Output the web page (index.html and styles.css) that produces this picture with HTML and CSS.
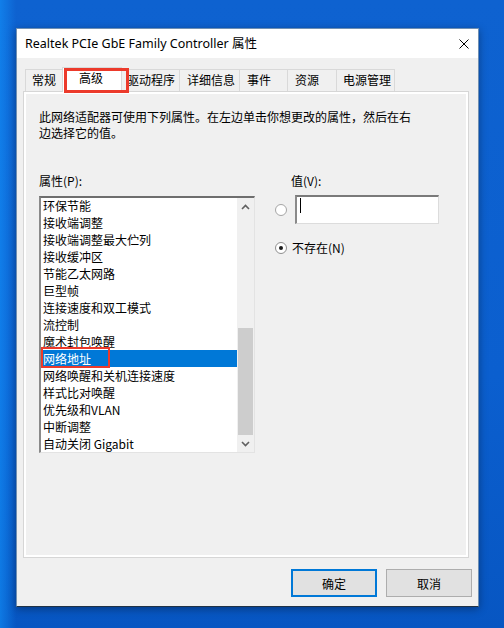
FILE: index.html
```html
<!DOCTYPE html>
<html lang="zh-CN">
<head>
<meta charset="utf-8">
<title>Realtek PCIe GbE Family Controller 属性</title>
<link rel="stylesheet" href="styles.css">
</head>
<body>
<div class="desktop">
  <div class="window">
    <div class="titlebar">
      <span class="title">Realtek PCIe GbE Family Controller 属性</span>
      <svg class="close" width="10" height="10" viewBox="0 0 10 10"><path d="M0.5 0.5 L9.5 9.5 M9.5 0.5 L0.5 9.5" stroke="#000" stroke-width="1" fill="none"/></svg>
    </div>
    <div class="client">
      <div class="tabs">
        <div class="tab first t-general">常规</div>
        <div class="tab selected t-adv">高级<span class="mark tab-mark"></span></div>
        <div class="tab t-driver">驱动程序</div>
        <div class="tab t-detail">详细信息</div>
        <div class="tab t-event">事件</div>
        <div class="tab t-res">资源</div>
        <div class="tab t-power">电源管理</div>
      </div>
      <div class="panel">
        <p class="desc">此网络适配器可使用下列属性。在左边单击你想更改的属性，然后在右边选择它的值。</p>
        <div class="props">
          <div class="left-col">
            <div class="label">属性(P):</div>
            <div class="listbox">
              <div class="items-wrap">
                <ul class="items">
                  <li>环保节能</li>
                  <li>接收端调整</li>
                  <li>接收端调整最大伫列</li>
                  <li>接收缓冲区</li>
                  <li>节能乙太网路</li>
                  <li>巨型帧</li>
                  <li>连接速度和双工模式</li>
                  <li>流控制</li>
                  <li>魔术封包唤醒</li>
                  <li class="sel">网络地址<span class="mark item-mark"></span></li>
                  <li>网络唤醒和关机连接速度</li>
                  <li>样式比对唤醒</li>
                  <li>优先级和VLAN</li>
                  <li>中断调整</li>
                  <li>自动关闭 Gigabit</li>
                </ul>
              </div>
              <div class="scrollbar">
                <div class="sb-btn">
                  <svg width="9" height="6" viewBox="0 0 9 6"><path d="M1 5 L4.5 1.5 L8 5" stroke="#606060" stroke-width="1.6" fill="none"/></svg>
                </div>
                <div class="sb-track"><div class="sb-thumb"></div></div>
                <div class="sb-btn">
                  <svg width="9" height="6" viewBox="0 0 9 6"><path d="M1 1 L4.5 4.5 L8 1" stroke="#606060" stroke-width="1.6" fill="none"/></svg>
                </div>
              </div>
            </div>
          </div>
          <div class="right-col">
            <div class="label vlabel">值(V):</div>
            <div class="vrow">
              <span class="radio"></span>
              <div class="textbox"><span class="caret"></span></div>
            </div>
            <div class="vrow2">
              <span class="radio checked"></span>
              <span class="rlabel">不存在(N)</span>
            </div>
          </div>
        </div>
      </div>
      <div class="buttons">
        <button class="btn primary">确定</button>
        <button class="btn">取消</button>
      </div>
    </div>
  </div>
</div>
</body>
</html>
```
FILE: styles.css
```css
* { box-sizing: border-box; }
html, body { margin: 0; padding: 0; }
body {
  font-family: "Noto Sans CJK SC", "Noto Sans", sans-serif;
  font-size: 12px;
  color: #000;
}
.desktop {
  width: 504px;
  height: 628px;
  padding: 28px 0 0 16px;
  overflow: hidden;
  background:
    linear-gradient(90deg, rgba(20,150,255,0.55) 0px, rgba(20,150,255,0) 16px),
    linear-gradient(180deg, #0e62d0 0%, #0b5fcf 60%, #0756c2 100%);
}
.window {
  width: 463px;
  height: 579px;
  background: #f0f0f0;
  border: 1px solid #6f8fb2;
  border-bottom-color: #1f3246;
  box-shadow: 0 2px 8px rgba(0,0,0,0.35);
  display: flex;
  flex-direction: column;
}
.titlebar {
  height: 29px;
  background: #fff;
  display: flex;
  align-items: center;
  padding-left: 8px;
  padding-right: 9px;
}
.title {
  flex: 1;
  font-family: "Noto Sans", "Noto Sans CJK SC", sans-serif;
  font-size: 12.5px;
  line-height: 16px;
  padding-top: 1px;
}
.close { display: block; margin-top: 0; }
.client {
  padding: 9px 9px 0 6px;
  display: flex;
  flex-direction: column;
}
.tabs {
  display: flex;
  align-items: flex-end;
  height: 25px;
  padding-left: 2px;
  position: relative;
  z-index: 2;
  margin-bottom: -1px;
}
.tab {
  height: 22px;
  margin-bottom: 1px;
  background: #f0f0f0;
  border-top: 1px solid #d9d9d9;
  border-right: 1px solid #d9d9d9;
  padding-left: 7px;
  line-height: 20px;
  white-space: nowrap;
}
.tab.first { border-left: 1px solid #d9d9d9; padding-left: 6px; }
.t-general { width: 39px; }
.t-driver { width: 60px; }
.t-detail { width: 60px; }
.t-event { width: 48px; }
.t-res { width: 49px; }
.t-power { width: 58px; padding-left: 6px; }
.tab.selected {
  position: relative;
  width: 60px;
  height: 25px;
  margin: 0 -2px 0 -2px;
  background: #fff;
  border: 1px solid #d9d9d9;
  border-bottom: none;
  padding-left: 16px;
  line-height: 20px;
  z-index: 3;
}
.mark {
  position: absolute;
  border: 2px solid #ec3a2b;
  pointer-events: none;
}
.tab-mark {
  left: 1px;
  top: 0px;
  width: 65px;
  height: 25px;
  border-width: 3px;
}
.panel {
  height: 467px;
  border: 1px solid #d6d6d6;
  box-shadow: inset 0 0 0 2px #fff;
  padding: 17px 0 0 15px;
  position: relative;
  z-index: 1;
}
.desc {
  margin: 0;
  width: 378px;
  line-height: 16px;
}
.props {
  display: flex;
  margin-top: 32px;
}
.left-col { width: 216px; }
.label { line-height: 16px; }
.listbox {
  margin-top: 7px;
  height: 257px;
  display: flex;
  border-style: solid;
  border-width: 2px 1px 1px 2px;
  border-color: #6e6e6e #e3e3e3 #e3e3e3 #8a8a8a;
  background: #fff;
}
.items-wrap {
  flex: 1;
  overflow: hidden;
}
.items {
  list-style: none;
  margin: -1px 0 0 0;
  padding: 0;
}
.items li {
  height: 17px;
  line-height: 17px;
  padding-left: 2px;
  white-space: nowrap;
  position: relative;
}
.items li.sel {
  background: #0078d7;
  color: #fff;
}
.item-mark {
  left: 0px;
  top: -3px;
  width: 69px;
  height: 21px;
}
.scrollbar {
  width: 17px;
  background: #f0f0f0;
  display: flex;
  flex-direction: column;
}
.sb-btn {
  height: 17px;
  display: flex;
  align-items: center;
  justify-content: center;
}
.sb-btn svg { display: block; }
.sb-track {
  flex: 1;
  display: flex;
  flex-direction: column;
  justify-content: flex-end;
  padding: 0 1px;
}
.sb-thumb {
  height: 107px;
  background: #cdcdcd;
}
.right-col {
  margin-left: 20px;
}
.vlabel { padding-left: 16px; }
.vrow {
  display: flex;
  align-items: center;
  margin-top: 6px;
}
.radio {
  width: 12px;
  height: 12px;
  border-radius: 50%;
  border: 1px solid #a5a5a5;
  background: #fff;
  display: flex;
  align-items: center;
  justify-content: center;
  flex: none;
}
.radio.checked { border-color: #8f8f8f; }
.radio.checked::after {
  content: "";
  width: 4px;
  height: 4px;
  border-radius: 50%;
  background: #1a1a1a;
}
.textbox {
  margin-left: 8px;
  width: 144px;
  height: 29px;
  background: #fff;
  border-style: solid;
  border-width: 2px 1px 1px 2px;
  border-color: #7a7a7a #dcdcdc #dcdcdc #8a8a8a;
  padding: 1px 0 0 3px;
}
.caret {
  display: block;
  width: 1px;
  height: 15px;
  background: #000;
}
.vrow2 {
  display: flex;
  align-items: center;
  margin-top: 16px;
  line-height: 16px;
}
.rlabel { margin-left: 5px; }
.buttons {
  display: flex;
  justify-content: flex-end;
  gap: 9px;
  margin-top: 11px;
  margin-right: -3px;
}
.btn {
  width: 86px;
  height: 28px;
  background: #e1e1e1;
  border: 1px solid #adadad;
  font-family: "Noto Sans CJK SC", sans-serif;
  font-size: 12px;
  color: #000;
  padding: 0;
}
.btn.primary {
  border: 2px solid #0078d7;
}
```
